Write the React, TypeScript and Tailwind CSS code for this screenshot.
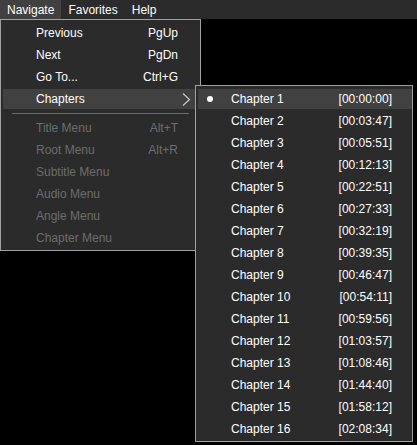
import React from "react";

type Item = { label: string; shortcut?: string; disabled?: boolean; sub?: boolean; active?: boolean };

const mainItems: (Item | "sep")[] = [
  { label: "Previous", shortcut: "PgUp" },
  { label: "Next", shortcut: "PgDn" },
  { label: "Go To...", shortcut: "Ctrl+G" },
  { label: "Chapters", sub: true, active: true },
  "sep",
  { label: "Title Menu", shortcut: "Alt+T", disabled: true },
  { label: "Root Menu", shortcut: "Alt+R", disabled: true },
  { label: "Subtitle Menu", disabled: true },
  { label: "Audio Menu", disabled: true },
  { label: "Angle Menu", disabled: true },
  { label: "Chapter Menu", disabled: true },
];

const chapters = [
  "00:00:00", "00:03:47", "00:05:51", "00:12:13", "00:22:51", "00:27:33", "00:32:19", "00:39:35",
  "00:46:47", "00:54:11", "00:59:56", "01:03:57", "01:08:46", "01:44:40", "01:58:12", "02:08:34",
];

function Chevron() {
  return (
    <svg width="9" height="13" viewBox="0 0 9 13" className="shrink-0">
      <path d="M1 0.5 L7.5 6.5 L1 12.5" fill="none" stroke="#c8c8c8" strokeWidth="1.2" />
    </svg>
  );
}

export default function App() {
  return (
    <div
      className="relative h-[445px] w-[417px] overflow-hidden bg-black text-[12px] leading-none"
      style={{ fontFamily: '"Segoe UI", "Liberation Sans", Arial, sans-serif' }}
    >
      <div className="flex h-[19px] items-center bg-[#2b2b2b] text-white">
        <div className="flex h-full items-center bg-[#414141] px-[7px]">Navigate</div>
        <div className="flex h-full items-center px-[7px]">Favorites</div>
        <div className="flex h-full items-center px-[7px]">Help</div>
      </div>

      <div className="absolute left-0 top-[19px] w-[201px] border border-[#a0a0a0] bg-[#2b2b2b] px-[2px] pb-[1px] pt-[2px]">
        {mainItems.map((item, i) =>
          item === "sep" ? (
            <div key={i} className="flex h-[7px] items-center px-[9px]">
              <div className="h-px w-full bg-[#6a6a6a]" />
            </div>
          ) : (
            <div key={i} className="h-[22px] py-px">
              <div
                className={`flex h-[20px] items-center pl-[33px] pr-[7px] ${item.active ? "bg-[#414141]" : ""} ${
                  item.disabled ? "text-[#6d6d6d]" : "text-white"
                }`}
              >
                <span className="flex-1">{item.label}</span>
                {item.shortcut && <span className="mr-[13px]">{item.shortcut}</span>}
                {item.sub && <Chevron />}
              </div>
            </div>
          )
        )}
      </div>

      <div className="absolute left-[195px] top-[85px] w-[218px] border border-[#a0a0a0] bg-[#2b2b2b] pb-[1px] pl-[2px] pt-[2px]">
        {chapters.map((t, i) => (
          <div key={t} className="h-[22px] py-px">
            <div className={`flex h-[20px] items-center text-white ${i === 0 ? "bg-[#414141]" : ""}`}>
              <span className="flex w-[33px] pl-[9px]">
                {i === 0 && <span className="block h-[6px] w-[6px] rounded-full bg-white" />}
              </span>
              <span className="flex-1">Chapter {i + 1}</span>
              <span className="mr-[20px]">[{t}]</span>
            </div>
          </div>
        ))}
      </div>
    </div>
  );
}
